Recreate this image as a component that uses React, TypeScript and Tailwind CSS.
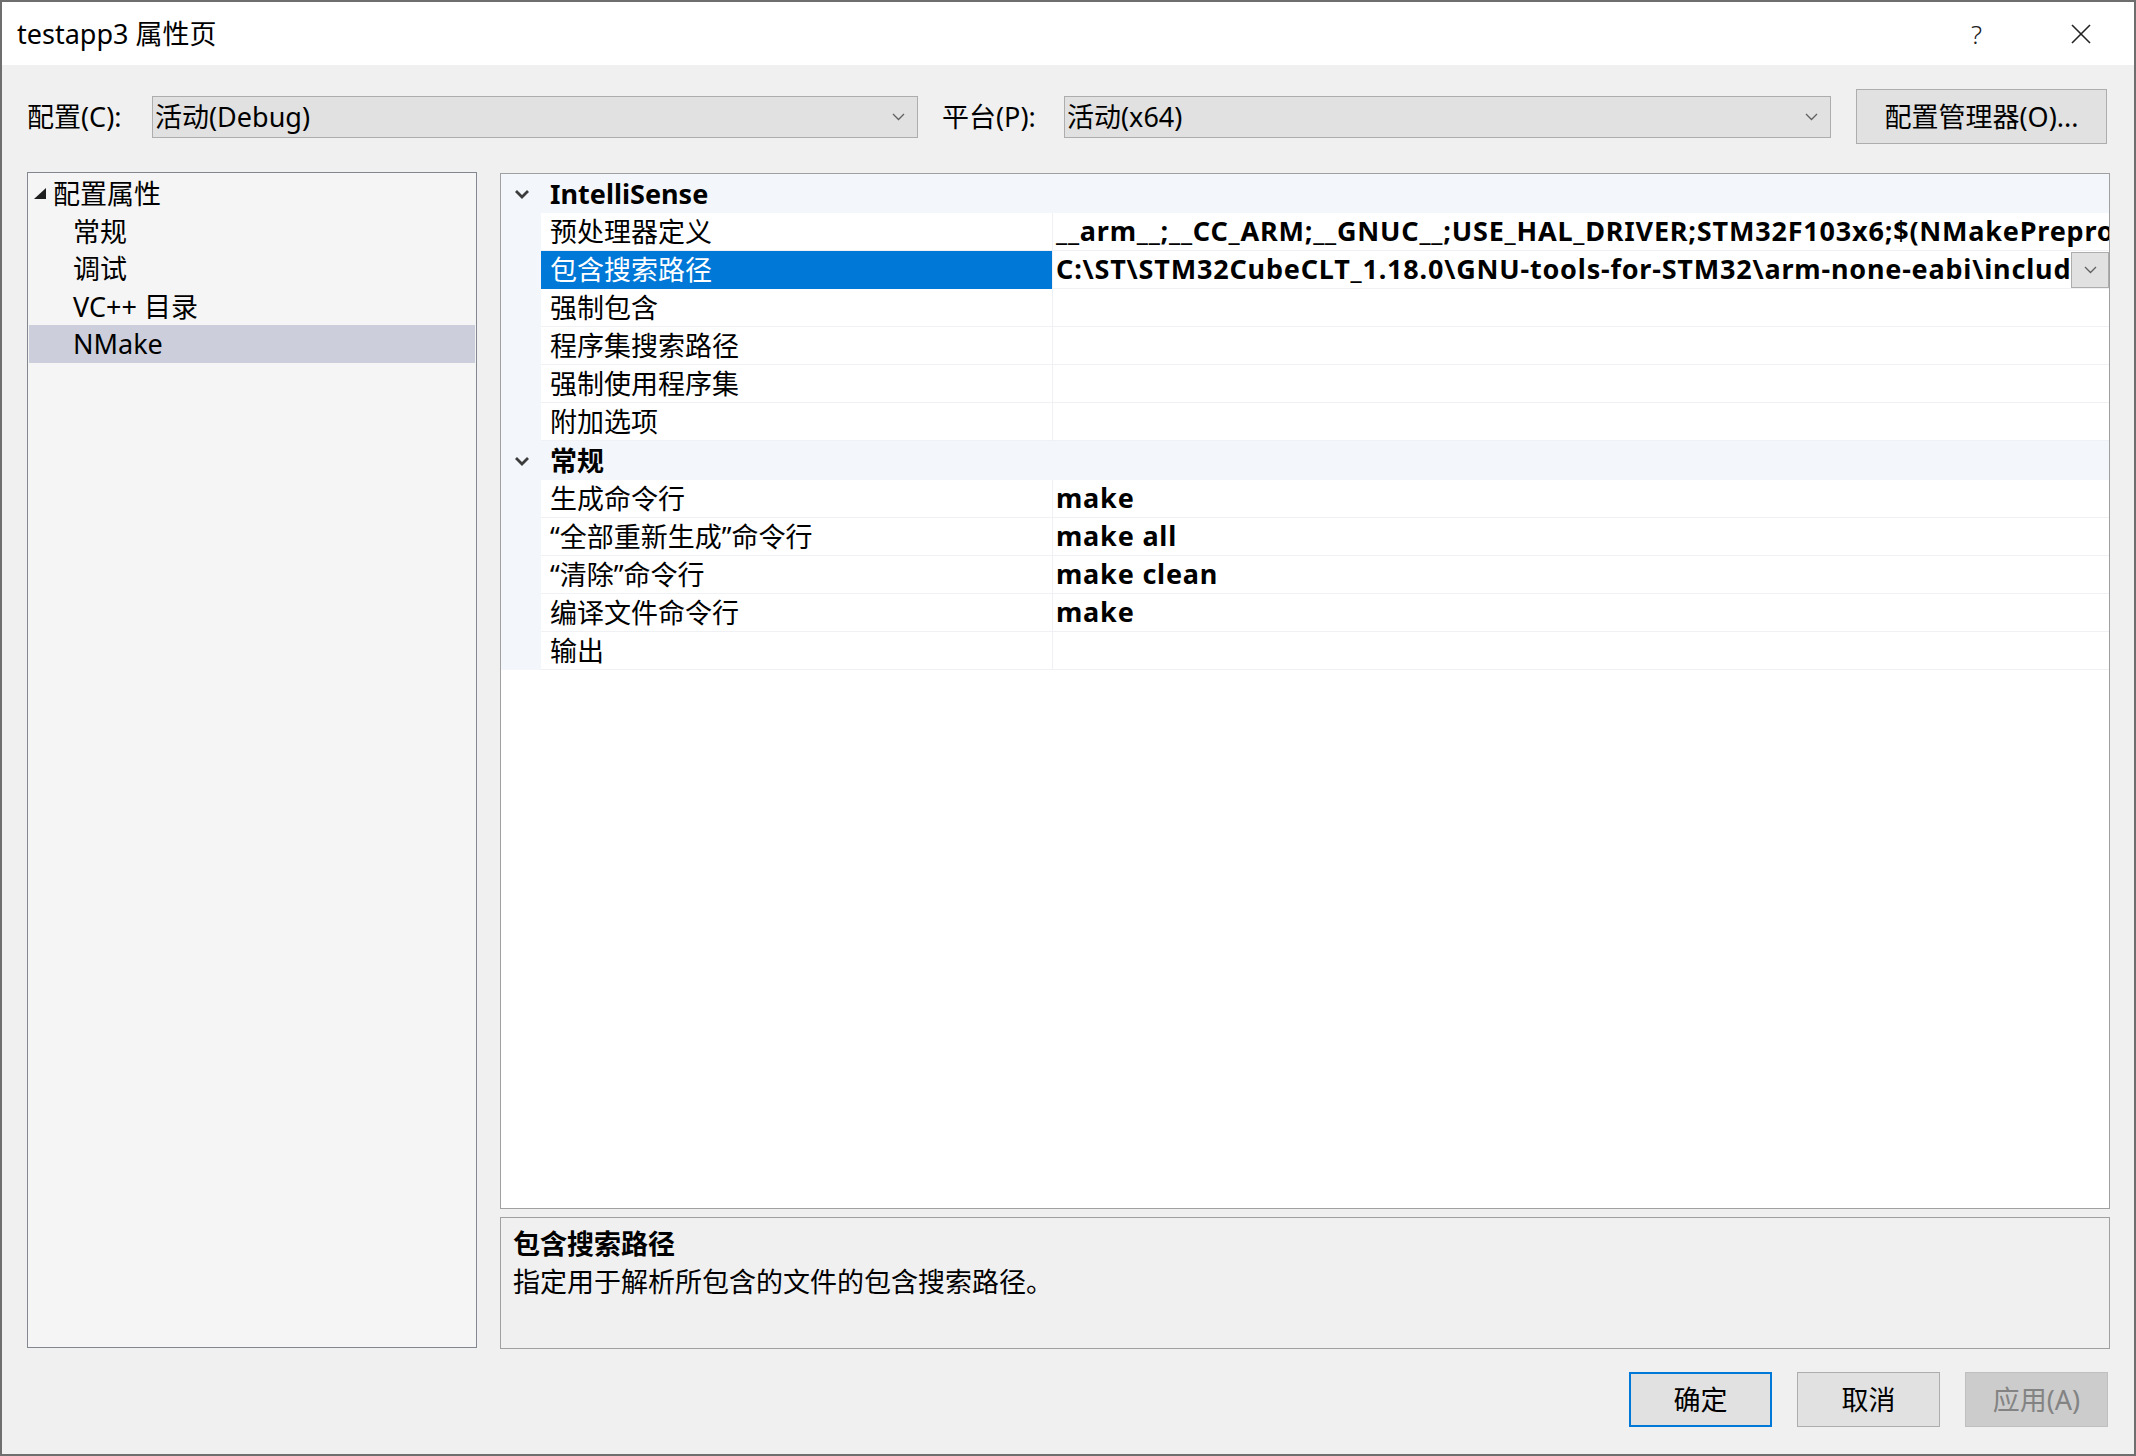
import React from "react";

const FONT = "font-['Noto_Sans','Noto_Sans_CJK_SC',sans-serif]";

function HeaderChevron() {
  return (
    <svg width="16" height="10" viewBox="0 0 16 10">
      <polyline points="2,2 8,8 14,2" fill="none" stroke="#3c3c3c" strokeWidth="2.8" />
    </svg>
  );
}

function ComboChevron() {
  return (
    <svg width="13" height="8" viewBox="0 0 13 8">
      <polyline points="1,1 6.5,6.5 12,1" fill="none" stroke="#606060" strokeWidth="1.3" />
    </svg>
  );
}

type Row = { name: string; value?: string; selected?: boolean };
type Group = { title: string; rows: Row[] };

const groups: Group[] = [
  {
    title: "IntelliSense",
    rows: [
      { name: "预处理器定义", value: "__arm__;__CC_ARM;__GNUC__;USE_HAL_DRIVER;STM32F103x6;$(NMakePreprocessorDefinitions)" },
      {
        name: "包含搜索路径",
        value: "C:\\ST\\STM32CubeCLT_1.18.0\\GNU-tools-for-STM32\\arm-none-eabi\\include;$(NMakeIncludeSearchPath)",
        selected: true,
      },
      { name: "强制包含" },
      { name: "程序集搜索路径" },
      { name: "强制使用程序集" },
      { name: "附加选项" },
    ],
  },
  {
    title: "常规",
    rows: [
      { name: "生成命令行", value: "make" },
      { name: "“全部重新生成”命令行", value: "make all" },
      { name: "“清除”命令行", value: "make clean" },
      { name: "编译文件命令行", value: "make" },
      { name: "输出" },
    ],
  },
];

export default function App() {
  return (
    <div
      className={`w-[2136px] h-[1456px] bg-[#f0f0f0] border-2 border-[#6e6e6e] flex flex-col text-[27px] text-black ${FONT}`}
    >
      {/* Title bar */}
      <div className="h-[63px] shrink-0 bg-white flex items-center justify-between pl-[15px] pr-[43px]">
        <span className="leading-none">testapp3 属性页</span>
        <div className="flex items-center">
          <span className="text-[26px] leading-none text-[#222] font-light">?</span>
          <div className="w-[89px]" />
          <svg width="20" height="20" viewBox="0 0 20 20">
            <line x1="1" y1="1" x2="19" y2="19" stroke="#222" strokeWidth="1.6" />
            <line x1="19" y1="1" x2="1" y2="19" stroke="#222" strokeWidth="1.6" />
          </svg>
        </div>
      </div>

      {/* Config row */}
      <div className="mt-[24px] h-[55px] shrink-0 flex items-center pl-[25px]">
        <span className="w-[125px] shrink-0 leading-none">配置(C):</span>
        <div className="w-[766px] shrink-0 h-[42px] bg-[#e1e1e1] border border-[#adadad] flex items-center pl-[2px] pr-[12px] justify-between">
          <span className="leading-none">活动(Debug)</span>
          <ComboChevron />
        </div>
        <div className="w-[24px] shrink-0" />
        <span className="w-[122px] shrink-0 leading-none">平台(P):</span>
        <div className="w-[767px] shrink-0 h-[42px] bg-[#e1e1e1] border border-[#adadad] flex items-center pl-[2px] pr-[12px] justify-between">
          <span className="leading-none">活动(x64)</span>
          <ComboChevron />
        </div>
        <div className="w-[25px] shrink-0" />
        <div className="w-[251px] shrink-0 h-[55px] bg-[#e1e1e1] border border-[#adadad] flex items-center justify-center">
          <span className="leading-none">配置管理器(O)...</span>
        </div>
      </div>

      {/* Main */}
      <div className="mt-[28px] h-[1177px] shrink-0 flex pl-[25px] pr-[26px]">
        {/* Tree */}
        <div className="w-[450px] shrink-0 h-[1176px] bg-[#f5f5f5] border border-[#828790] pt-[2px] px-px">
          <div className="h-[37.5px] flex items-center pl-[5px]">
            <svg width="13" height="11" viewBox="0 0 13 11" className="mr-[6px]">
              <polygon points="12,0 12,11 0,11" fill="#1e1e1e" />
            </svg>
            <span className="leading-none">配置属性</span>
          </div>
          {["常规", "调试", "VC++ 目录", "NMake"].map((t) => (
            <div
              key={t}
              className={`h-[37.5px] flex items-center pl-[44px] whitespace-nowrap ${t === "NMake" ? "bg-[#cccedb]" : ""}`}
            >
              <span className="leading-none">{t}</span>
            </div>
          ))}
        </div>

        <div className="w-[23px] shrink-0" />

        {/* Right column */}
        <div className="w-[1610px] shrink-0 min-w-0 flex flex-col">
          <div className="mt-px h-[1036px] bg-white border border-[#a0a0a0] overflow-hidden">
            {groups.map((g) => (
              <div key={g.title}>
                <div className="h-[39px] bg-[#f3f6fa] flex items-center">
                  <div className="w-[40px] flex justify-center pl-[2px]">
                    <HeaderChevron />
                  </div>
                  <span className="font-bold leading-none pl-[9px]">{g.title}</span>
                </div>
                {g.rows.map((r) => (
                  <div key={r.name} className="h-[38px] flex bg-[#f3f6fa]">
                    <div className="w-[40px] shrink-0" />
                    <div
                      className={`w-[511px] shrink-0 flex items-center pl-[9px] border-b ${
                        r.selected ? "bg-[#0078d7] text-white border-[#0078d7]" : "bg-white border-[#eff1f5]"
                      }`}
                    >
                      <span className="leading-none whitespace-nowrap">{r.name}</span>
                    </div>
                    <div className="w-px shrink-0 bg-[#eef0f3]" />
                    <div className="flex-1 min-w-0 flex items-center bg-white border-b border-[#eff1f5]">
                      <div className="flex-1 min-w-0 overflow-hidden pl-[3px]">
                        <span className="font-bold leading-none whitespace-nowrap tracking-[0.8px]">{r.value ?? ""}</span>
                      </div>
                      {r.selected && (
                        <div className="w-[38px] h-[36px] shrink-0 bg-[#e1e1e1] border border-[#adadad] flex items-center justify-center">
                          <ComboChevron />
                        </div>
                      )}
                    </div>
                  </div>
                ))}
              </div>
            ))}
          </div>
          <div className="mt-[8px] h-[132px] bg-[#f0f0f0] border border-[#a0a0a0] pt-[7px] pl-[12px]">
            <div className="font-bold leading-[38px]">包含搜索路径</div>
            <div className="leading-[38px]">指定用于解析所包含的文件的包含搜索路径。</div>
          </div>
        </div>
      </div>

      {/* Buttons */}
      <div className="mt-[23px] h-[55px] shrink-0 flex justify-end gap-[25px] pr-[26px]">
        <div className="w-[143px] h-[55px] bg-[#e1e1e1] border-2 border-[#0078d7] flex items-center justify-center">
          <span className="leading-none">确定</span>
        </div>
        <div className="w-[143px] h-[55px] bg-[#e1e1e1] border border-[#adadad] flex items-center justify-center">
          <span className="leading-none">取消</span>
        </div>
        <div className="w-[143px] h-[55px] bg-[#cccccc] border border-[#bfbfbf] flex items-center justify-center">
          <span className="leading-none text-[#838383]">应用(A)</span>
        </div>
      </div>
    </div>
  );
}
